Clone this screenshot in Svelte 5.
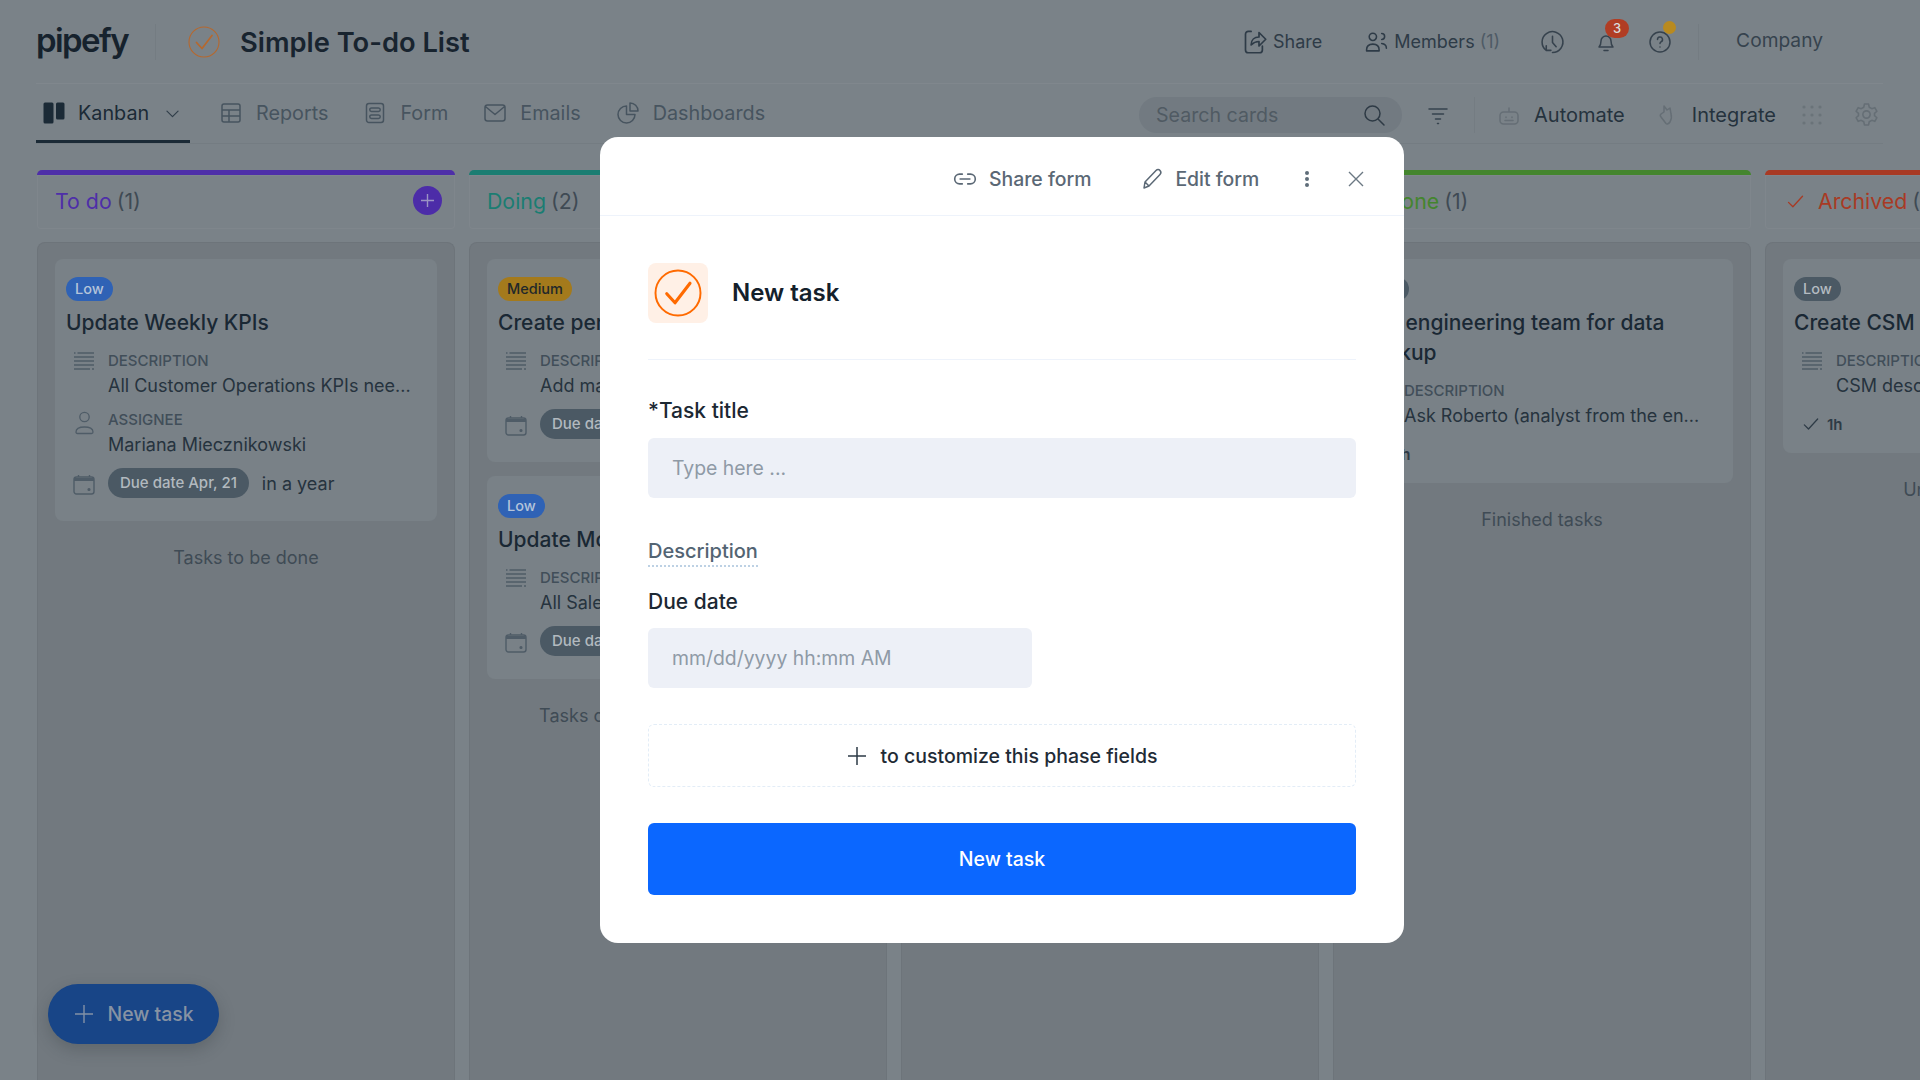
<script>
  const columns = [
    {
      name: 'To do', count: 1, accent: '#4e2fa8', plus: true, caption: 'Tasks to be done',
      cards: [{
        tag: 'Low', tagKind: 'blue', title: 'Update Weekly KPIs',
        desc: 'All Customer Operations KPIs nee...', assignee: 'Mariana Miecznikowski',
        due: 'Due date Apr, 21', when: 'in a year'
      }]
    },
    {
      name: 'Doing', count: 2, accent: '#1b7d72', caption: 'Tasks currently being worked on',
      cards: [
        { tag: 'Medium', tagKind: 'amber', title: 'Create performance report', desc: 'Add main metrics to the report', due: 'Due date Apr, 21' },
        { tag: 'Low', tagKind: 'blue', title: 'Update Monthly KPIs', desc: 'All Sales KPIs need to be updated', due: 'Due date Apr, 21' }
      ]
    },
    { name: 'Review', count: 0, accent: '#b5841f', caption: '', cards: [] },
    {
      name: 'Done', count: 1, accent: '#44852e', final: true, caption: 'Finished tasks',
      cards: [{
        tag: 'Low', tagKind: 'grey', title: 'Ask engineering team for data backup',
        desc: 'Ask Roberto (analyst from the en...', time: '1h'
      }]
    },
    {
      name: 'Archived', count: 1, accent: '#a83a24', final: true, caption: 'Unfinished tasks',
      cards: [{ tag: 'Low', tagKind: 'grey', title: 'Create CSM report', desc: 'CSM description text', time: '1h' }]
    }
  ];
</script>

{#snippet circleCheck(size, color, width)}
  <svg width={size} height={size} viewBox="0 0 32 32" fill="none" stroke={color} stroke-width={width}>
    <circle cx="16" cy="16" r="15" />
    <path d="M8.5 16.5l5.5 6 10-13" stroke-linecap="round" stroke-linejoin="round" stroke-width={width * 1.6} />
  </svg>
{/snippet}

{#snippet icon(d, size = 22)}
  <svg class="ico" width={size} height={size} viewBox="0 0 24 24" fill="none" stroke="currentColor" stroke-width="1.5" stroke-linecap="round" stroke-linejoin="round">
    <path {d} />
  </svg>
{/snippet}

<div class="page">
  <header class="top">
    <span class="logo">pipefy</span>
    <span class="vline"></span>
    <span class="appicon">{@render circleCheck(32, '#b5682f', 1.1)}</span>
    <h1>Simple To-do List</h1>
    <nav class="top-actions">
      <span class="act share">{@render icon('M9 3H6.5A2.5 2.5 0 0 0 4 5.5v14A2.5 2.5 0 0 0 6.5 22h10a2.5 2.5 0 0 0 2.5-2.5V16M9 15c0-4.500 3-7 7-7V4l6 6-6 6v-4c-3 0-5 1-7 3z', 27)}Share</span>
      <span class="act members">
        {@render icon('M8.500 11a3.500 3.500 0 1 0 0-7 3.500 3.500 0 0 0 0 7zM2.500 20c0-3.500 2.500-5.500 6-5.500s6 2 6 5.500v1h-12zM17 10a2.800 2.800 0 1 0 0-5.600M17 14c2.800.3 4.500 2 4.500 4.500', 25)}
        Members <em>(1)</em>
      </span>
      <span class="glyph hist">{@render icon('M6 20.500A10 10 0 1 1 12 22.500M6 16v4.500h4.500M12 7v6l3.500 4', 25)}</span>
      <span class="glyph bell">
        {@render icon('M5 17c1.500-1.500 2-3 2-6a5 5 0 0 1 10 0c0 3 .5 4.500 2 6zM10 20.500h4', 24)}
        <b class="count-badge">3</b>
      </span>
      <span class="glyph help">
        {@render icon('M12 22a10 10 0 1 0 0-20 10 10 0 0 0 0 20zM9.500 9.500a2.500 2.500 0 1 1 3.500 2.300c-.7.4-1 .9-1 1.700M12 17v.1', 24)}
        <b class="dot"></b>
      </span>
      <span class="vline right"></span>
      <span class="company">Company</span>
    </nav>
  </header>

  <div class="tabs">
    <span class="tab active">
      <svg width="22" height="22" viewBox="0 0 22 22" fill="#1b2a36"><rect x="0.500" y="0.500" width="10" height="21" rx="1.500" /><rect x="13" y="0.500" width="8.500" height="17" rx="1.500" /></svg>
      <span>Kanban</span>
      <span class="chev">{@render icon('M5 9l7 7 7-7', 19)}</span>
    </span>
    <span class="tab">{@render icon('M5 3h14a2 2 0 0 1 2 2v14a2 2 0 0 1-2 2H5a2 2 0 0 1-2-2V5a2 2 0 0 1 2-2zM3 9h18M3 15h18M10 9v12', 24)}<span>Reports</span></span>
    <span class="tab">{@render icon('M6 2.500h12a2.500 2.500 0 0 1 2.500 2.500v14a2.500 2.500 0 0 1-2.500 2.500H6A2.500 2.500 0 0 1 3.500 19V5A2.500 2.500 0 0 1 6 2.500zM8.500 7h7a1.500 1.500 0 0 1 0 3.500h-7a1.500 1.500 0 0 1 0-3.500zM8.500 14h7a1.500 1.500 0 0 1 0 3.500h-7a1.500 1.500 0 0 1 0-3.500z', 24)}<span>Form</span></span>
    <span class="tab">{@render icon('M4.500 4h15A2.500 2.500 0 0 1 22 6.500v11a2.500 2.500 0 0 1-2.500 2.500h-15A2.500 2.500 0 0 1 2 17.500v-11A2.500 2.500 0 0 1 4.500 4zM3 6l9 7.500L21 6', 24)}<span>Emails</span></span>
    <span class="tab">{@render icon('M10.500 5A8.500 8.500 0 1 0 19 13.500h-8.500zM14 2v8h8a8 8 0 0 0-8-8z', 24)}<span>Dashboards</span></span>

    <div class="tools">
      <span class="search">
        <span>Search cards</span>
        {@render icon('M10.500 18a7.500 7.500 0 1 0 0-15 7.500 7.500 0 0 0 0 15zM16 16l6 6', 24)}
      </span>
      <span class="filter">{@render icon('M3 6h18M6.500 11h11M9.500 16h5M11.500 20.500h1', 24)}</span>
      <span class="vline short"></span>
      <span class="tool">
        <span class="faint">{@render icon('M6.500 9h11A3.500 3.500 0 0 1 21 12.500v5a3.500 3.500 0 0 1-3.500 3.500h-11A3.500 3.500 0 0 1 3 17.500v-5A3.500 3.500 0 0 1 6.500 9zM12 9V5M9 14v.5M15 14v.5M8 17.500h8', 24)}</span>
        Automate
      </span>
      <span class="tool">
        <span class="faint">{@render icon('M9 3l3 4 3-2 1 6c1 3 0 6-1 8-1 1.500-3 2.500-4 1.500L6 14c-1-1-1-2 0-3l3-2z', 24)}</span>
        Integrate
      </span>
      <svg class="grid-dots" width="20" height="20" viewBox="0 0 20 20" fill="#6a7379">
        {#each [2, 10, 18] as y}
          {#each [2, 10, 18] as x}
            <circle cx={x} cy={y} r="1.600" />
          {/each}
        {/each}
      </svg>
      <span class="gear">{@render icon('M12 15.500a3.500 3.500 0 1 0 0-7 3.500 3.500 0 0 0 0 7zM10 2h4l.6 3 2.500 1.400 2.900-1 2 3.500-2.300 2v2.200l2.300 2-2 3.500-2.900-1-2.500 1.400-.6 3h-4l-.6-3-2.500-1.400-2.900 1-2-3.500 2.300-2v-2.200l-2.300-2 2-3.500 2.900 1L9.400 5z', 25)}</span>
    </div>
  </div>

  <main class="board">
    {#each columns as col}
      <section class="col" style:--accent={col.accent}>
        <div class="col-head">
          {#if col.final}
            <span class="arch-check">{@render icon('M4 13l5 5L20 6', 21)}</span>
          {/if}
          <span class="col-name">{col.name}</span>
          <span class="col-count">({col.count})</span>
          {#if col.plus}
            <span class="col-plus">
              <svg width="13" height="13" viewBox="0 0 13 13" stroke="#9b93c4" stroke-width="1.400"><path d="M6.500 0v13M0 6.500h13" /></svg>
            </span>
          {/if}
        </div>
        <div class="col-body">
          {#each col.cards as card}
            <article class="card">
              <span class="tag {card.tagKind}">{card.tag}</span>
              <h3>{card.title}</h3>
              <div class="field">
                <svg class="field-ico" width="20" height="20" viewBox="0 0 20 20" stroke="#4f5c67" stroke-width="1.300">
                  <path d="M0 1h1.500M3.500 1H20M0 5h20M0 9h20M0 13h20M0 17h16M18 17h2" />
                </svg>
                <div>
                  <div class="label">DESCRIPTION</div>
                  <div class="value">{card.desc}</div>
                </div>
              </div>
              {#if card.assignee}
                <div class="field">
                  <svg class="field-ico" width="20" height="24" viewBox="0 0 20 24" fill="none" stroke="#4f5c67" stroke-width="1.300">
                    <circle cx="10.500" cy="6" r="4.700" />
                    <path d="M2 21c0-3.500 3.500-5 8.500-5s8.500 1.500 8.500 5c0 1-.5 1.500-1.500 1.500h-14C2.500 22.500 2 22 2 21z" />
                  </svg>
                  <div>
                    <div class="label">ASSIGNEE</div>
                    <div class="value">{card.assignee}</div>
                  </div>
                </div>
              {/if}
              {#if card.due}
                <div class="due">
                  <svg class="field-ico" width="22" height="20" viewBox="0 0 22 20" fill="none" stroke="#4f5c67" stroke-width="1.400">
                    <rect x="1" y="2" width="20" height="17" rx="2.500" />
                    <path d="M1 4.500h20" stroke-width="3" />
                    <path d="M5.500 0v2M16.500 0v2" />
                    <circle cx="16" cy="14.500" r="0.900" fill="#4f5c67" />
                  </svg>
                  <span class="due-pill">{card.due}</span>
                  {#if card.when}<span class="when">{card.when}</span>{/if}
                </div>
              {/if}
              {#if card.time}
                <div class="spent">
                  {@render icon('M4 13l5 5L20 6', 20)}
                  <span>{card.time}</span>
                </div>
              {/if}
            </article>
          {/each}
          {#if col.caption}
            <p class="caption">{col.caption}</p>
          {/if}
        </div>
      </section>
    {/each}
  </main>

  <button class="fab">
    <svg width="20" height="20" viewBox="0 0 20 20" stroke="#8291a6" stroke-width="1.400"><path d="M10 1v18M1 10h18" /></svg>
    New task
  </button>

  <div class="overlay">
    <div class="modal">
      <div class="modal-bar">
        <span class="bar-act first">{@render icon('M9.500 7.500H7a4.500 4.500 0 0 0 0 9h2.500M14.500 7.500H17a4.500 4.500 0 0 1 0 9h-2.500M7.500 12h9', 26)}Share form</span>
        <span class="bar-act second">{@render icon('M4 21l1-6L16 3.500c1.200-1.200 3-1.200 4 0s1.200 2.800 0 4L9 19zM5 15l4 4', 24)}Edit form</span>
        <svg class="kebab" width="6" height="18" viewBox="0 0 6 18" fill="#5f6d79"><circle cx="3" cy="3" r="2" /><circle cx="3" cy="9" r="2" /><circle cx="3" cy="15" r="2" /></svg>
        <svg class="close" width="16" height="16" viewBox="0 0 16 16" stroke="#6b7883" stroke-width="1.400"><path d="M1 1l14 14M15 1L1 15" /></svg>
      </div>
      <form class="modal-body">
        <div class="form-head">
          <span class="form-icon">{@render circleCheck(48, '#ff6a00', 1.3)}</span>
          <h2>New task</h2>
        </div>
        <label class="f-label" for="task-title">*Task title</label>
        <input id="task-title" class="f-input" type="text" placeholder="Type here ..." />
        <div class="desc-row"><span class="f-desc">Description</span></div>
        <label class="f-label due-label" for="task-due">Due date</label>
        <input id="task-due" class="f-input narrow" type="text" placeholder="mm/dd/yyyy hh:mm AM" />
        <div class="customize">
          <svg width="20" height="20" viewBox="0 0 20 20" stroke="#2c3a46" stroke-width="1.500"><path d="M10 1v18M1 10h18" /></svg>
          <span>to customize this phase fields</span>
        </div>
        <button class="submit" type="button">New task</button>
      </form>
    </div>
  </div>
</div>

<style>
  :global(body) {
    margin: 0;
    background: #7a8288;
  }

  .page {
    position: relative;
    width: 1920px;
    height: 1080px;
    overflow: hidden;
    display: flex;
    flex-direction: column;
    background: #7a8288;
    color: #1b2833;
    font-family: Inter, "Liberation Sans", sans-serif;
  }

  .ico {
    display: block;
    flex: none;
  }

  .vline {
    width: 1px;
    height: 36px;
    background: #747c82;
    flex: none;
  }

  /* top bar */
  .top {
    height: 83px;
    margin: 0 37px 0 36px;
    border-bottom: 1px solid #80878d;
    display: flex;
    align-items: center;
    flex: none;
  }

  .logo {
    width: 119px;
    font-size: 33px;
    font-weight: 600;
    letter-spacing: -1.6px;
    color: #16222d;
    line-height: 1;
    margin-top: -2px;
  }

  .appicon {
    display: block;
    height: 32px;
    margin-left: 32px;
  }

  h1 {
    margin: 1px 0 0 20px;
    font-size: 27.3px;
    font-weight: 600;
    color: #18242f;
  }

  .top-actions {
    margin-left: auto;
    display: flex;
    align-items: center;
    font-size: 18px;
    color: #2e3b47;
    font-weight: 400;
  }

  .act {
    display: flex;
    align-items: center;
    gap: 5px;
  }

  .act em {
    font-style: normal;
    color: #4f5b66;
  }

  .members {
    margin-left: 42px;
  }

  .glyph {
    position: relative;
    display: block;
    color: #36424d;
  }

  .hist {
    margin-left: 40px;
  }

  .bell {
    margin-left: 29px;
  }

  .help {
    margin-left: 30px;
  }

  .count-badge {
    position: absolute;
    left: 11px;
    top: -11px;
    width: 24px;
    height: 19px;
    border-radius: 10px;
    background: #b13d24;
    color: #d9dcdc;
    font-size: 13px;
    font-weight: 500;
    line-height: 19px;
    text-align: center;
  }

  .dot {
    position: absolute;
    left: 15px;
    top: -9px;
    width: 13px;
    height: 13px;
    border-radius: 50%;
    background: #b98a1f;
  }

  .vline.right {
    margin-left: 26px;
  }

  .company {
    margin: -4px 60px 0 37px;
    font-size: 19.2px;
    color: #36434e;
  }

  /* tabs */
  .tabs {
    height: 59px;
    margin: 0 37px 0 36px;
    border-bottom: 1px solid #747c82;
    display: flex;
    align-items: stretch;
    flex: none;
  }

  .tab {
    display: flex;
    align-items: center;
    gap: 13px;
    margin-right: 35px;
    padding-bottom: 1px;
    font-size: 19.8px;
    color: #47545f;
  }

  .tab.active {
    width: 154px;
    box-sizing: border-box;
    padding: 0 0 1px 7px;
    margin: 0 29px 0 0;
    color: #1b2a36;
    box-shadow: inset 0 -3px 0 #1b2a36;
  }

  .chev {
    margin-left: 1px;
    color: #303e4a;
  }

  .tools {
    margin-left: auto;
    display: flex;
    align-items: center;
    padding-top: 2px;
  }

  .search {
    width: 263px;
    height: 36px;
    box-sizing: border-box;
    padding: 0 16px 0 17px;
    border-radius: 18px;
    background: #727a81;
    display: flex;
    align-items: center;
    justify-content: space-between;
    font-size: 19.6px;
    color: #505a63;
  }

  .search :global(svg) {
    color: #2e3a45;
  }

  .filter {
    display: block;
    margin-left: 24px;
    color: #36434e;
  }

  .vline.short {
    margin-left: 24px;
  }

  .tool {
    display: flex;
    align-items: center;
    gap: 13px;
    margin-left: 22px;
    font-size: 20px;
    color: #25323d;
  }

  .faint {
    color: #656e75;
  }

  .tool + .tool {
    margin-left: 30px;
  }

  .grid-dots {
    margin-left: 26px;
  }

  .gear {
    display: block;
    margin: 0 4px 0 32px;
    color: #656e75;
  }

  /* board */
  .board {
    flex: 1;
    min-height: 0;
    display: flex;
    gap: 14px;
    padding: 26px 0 0 37px;
  }

  .col {
    flex: 0 0 418px;
    display: flex;
    flex-direction: column;
    gap: 13px;
  }

  .col-head {
    height: 52px;
    padding: 0 13px 2px 18px;
    border-top: 5px solid var(--accent);
    border-radius: 5px 5px 4px 4px;
    box-sizing: content-box;
    box-shadow: inset 0 0 0 1px #7f868c;
    display: flex;
    align-items: center;
    gap: 5px;
    font-size: 21.3px;
  }

  .col-name {
    color: var(--accent);
  }

  .col-count {
    color: #3f4a54;
  }

  .arch-check {
    color: var(--accent);
    margin: 0 7px 0 2px;
  }

  .col-plus {
    margin: -2px 0 0 auto;
    width: 29px;
    height: 29px;
    border-radius: 50%;
    background: #4c2ca8;
    display: flex;
    align-items: center;
    justify-content: center;
  }

  .col-body {
    flex: 1;
    background: #72797f;
    border: 1px solid #6d747a;
    border-bottom: 0;
    border-radius: 8px 8px 0 0;
    padding: 16px 17px;
    display: flex;
    flex-direction: column;
    gap: 14px;
  }

  .card {
    background: #798187;
    border-radius: 8px;
    padding: 18px 11px 23px;
  }

  .tag {
    display: block;
    width: fit-content;
    height: 24px;
    padding: 0 9px;
    border-radius: 12px;
    font-size: 14.5px;
    font-weight: 500;
    line-height: 24px;
  }

  .tag.blue {
    background: #2f62b5;
    color: #b4c4da;
  }

  .tag.amber {
    background: #a47a1c;
    color: #22282a;
  }

  .tag.grey {
    background: #4b5964;
    color: #b4bbc1;
  }

  h3 {
    margin: 7px 0 11px;
    font-size: 21px;
    font-weight: 500;
    line-height: 30px;
    color: #1a2834;
  }

  .field {
    display: flex;
    gap: 14px;
    padding-left: 8px;
    margin-bottom: 10px;
  }

  .field-ico {
    flex: none;
    margin-top: 3px;
  }

  .label {
    font-size: 15px;
    font-weight: 500;
    line-height: 24px;
    color: #414e59;
  }

  .value {
    padding-top: 1px;
    font-size: 18px;
    line-height: 24px;
    color: #26333e;
    white-space: nowrap;
  }

  .due {
    display: flex;
    align-items: center;
    padding-left: 7px;
    margin-top: 11px;
    height: 30px;
  }

  .due-pill {
    margin-left: 13px;
    height: 30px;
    padding: 0 12px;
    border-radius: 15px;
    background: #4b5964;
    color: #b2b9bf;
    font-size: 15px;
    font-weight: 500;
    line-height: 30px;
    white-space: nowrap;
  }

  .when {
    margin-left: 13px;
    font-size: 18px;
    color: #26333e;
  }

  .spent {
    display: flex;
    align-items: center;
    gap: 6px;
    height: 12px;
    margin-top: 20px;
    padding-left: 7px;
    font-size: 15px;
    font-weight: 600;
    color: #2e3b46;
  }

  .caption {
    margin: 11px 0 0;
    font-size: 18px;
    line-height: 24px;
    text-align: center;
    color: #3f4b55;
    white-space: nowrap;
  }

  /* floating button */
  .fab {
    position: absolute;
    left: 48px;
    top: 984px;
    width: 171px;
    height: 60px;
    border: 0;
    border-radius: 30px;
    background: #184587;
    color: #8793a3;
    box-shadow: 0 6px 16px rgba(40, 46, 52, 0.25);
    display: flex;
    align-items: center;
    justify-content: center;
    gap: 14px;
    font-family: inherit;
    font-size: 19.4px;
    font-weight: 500;
  }

  /* modal */
  .overlay {
    position: absolute;
    inset: 0;
    padding: 137px 0 0 600px;
    backdrop-filter: blur(0.5px);
  }

  .modal {
    width: 804px;
    height: 806px;
    background: #fff;
    border-radius: 18px;
  }

  .modal-bar {
    height: 72px;
    padding-top: 6px;
    border-bottom: 1px solid #eef3fb;
    display: flex;
    align-items: center;
    font-size: 19.4px;
    font-weight: 500;
    color: #5b6875;
  }

  .bar-act {
    display: flex;
    align-items: center;
    gap: 11px;
    color: #5b6875;
  }

  .bar-act.first {
    margin-left: 352px;
  }

  .bar-act.second {
    margin-left: 49px;
  }

  .kebab {
    margin-left: 45px;
  }

  .close {
    margin-left: 38px;
  }

  .modal-body {
    padding: 47px 48px 0;
    display: flex;
    flex-direction: column;
  }

  .form-head {
    display: flex;
    align-items: center;
    gap: 24px;
    padding-bottom: 36px;
    border-bottom: 1px solid #eef3fb;
  }

  .form-icon {
    width: 60px;
    height: 60px;
    border-radius: 8px;
    background: #fff0e6;
    display: flex;
    align-items: center;
    justify-content: center;
  }

  h2 {
    margin: -2px 0 0;
    font-size: 24px;
    font-weight: 600;
    color: #14202b;
  }

  .f-label {
    margin-top: 36px;
    font-size: 21px;
    font-weight: 500;
    line-height: 30px;
    color: #1c2833;
  }

  .f-input {
    box-sizing: border-box;
    width: 100%;
    height: 60px;
    margin-top: 12px;
    padding: 0 24px;
    border: 0;
    border-radius: 6px;
    background: #edf0f7;
    font-family: inherit;
    font-size: 19.4px;
    color: #1c2833;
  }

  .f-input::placeholder {
    color: #8f9aa6;
    opacity: 1;
  }

  .f-input.narrow {
    width: 384px;
    margin-top: 11px;
  }

  .desc-row {
    margin-top: 39px;
    height: 30px;
  }

  .f-desc {
    display: inline-block;
    font-size: 20px;
    font-weight: 500;
    line-height: 28px;
    color: #536473;
    border-bottom: 2px dotted #bdd1e4;
  }

  .f-label.due-label {
    margin-top: 20px;
  }

  .customize {
    height: 63px;
    box-sizing: border-box;
    margin-top: 36px;
    border: 1px dashed #e3edf7;
    border-radius: 6px;
    display: flex;
    align-items: center;
    justify-content: center;
    gap: 14px;
    font-size: 19.5px;
    font-weight: 500;
    color: #1f2b36;
  }

  .submit {
    height: 72px;
    margin-top: 36px;
    border: 0;
    border-radius: 6px;
    background: #0b67ff;
    color: #fff;
    font-family: inherit;
    font-size: 19.5px;
    font-weight: 500;
  }
</style>
